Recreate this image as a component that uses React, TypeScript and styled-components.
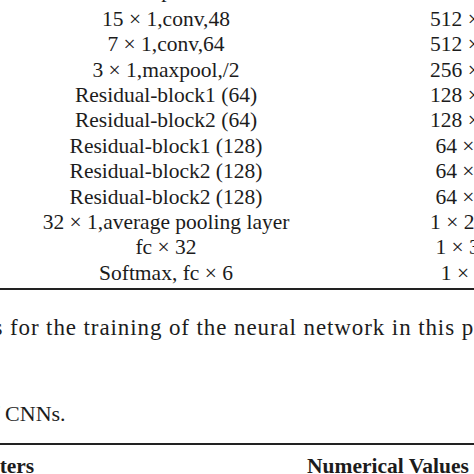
import React from "react";
import styled, { createGlobalStyle } from "styled-components";

const Global = createGlobalStyle`
  html, body {
    margin: 0;
    padding: 0;
    background: #ffffff;
    overflow: hidden;
  }
`;

const Page = styled.div`
  width: 474px;
  height: 474px;
  overflow: hidden;
  background: #ffffff;
`;

const Sheet = styled.div`
  margin-top: -22.5px;
  margin-left: -100px;
  width: 800px;
  font-family: "Liberation Serif", "Times New Roman", serif;
  color: #1c1c1c;
`;

const LayerTable = styled.div`
  display: grid;
  grid-template-columns: 300px 294px;
  padding-left: 116px;
  padding-bottom: 2px;
  border-bottom: 2px solid #222222;
`;

const Cell = styled.div<{ $lead?: boolean }>`
  height: 25.4px;
  line-height: 25.4px;
  padding-bottom: ${(p) => (p.$lead ? 4 : 0)}px;
  font-size: 21.5px;
  text-align: center;
  white-space: nowrap;
`;

const Line = styled.p<{ $top: number; $indent: number; $size: number; $spacing: number }>`
  margin: ${(p) => p.$top}px 0 0 ${(p) => p.$indent}px;
  font-size: ${(p) => p.$size}px;
  letter-spacing: ${(p) => p.$spacing}px;
  line-height: 26px;
  white-space: nowrap;
`;

const ParamTable = styled.div`
  margin-top: 16px;
  border-top: 2px solid #222222;
  padding-top: 8px;
  display: grid;
  grid-template-columns: 379px 300px;
  padding-left: 28px;
`;

const HeadCell = styled.div`
  font-size: 21.5px;
  line-height: 26px;
  font-weight: bold;
  white-space: nowrap;
`;

const layers: [string, string][] = [
  ["Input", "1024 × 1"],
  ["15 × 1,conv,48", "512 × 1"],
  ["7 × 1,conv,64", "512 × 1"],
  ["3 × 1,maxpool,/2", "256 × 1"],
  ["Residual-block1 (64)", "128 × 1"],
  ["Residual-block2 (64)", "128 × 1"],
  ["Residual-block1 (128)", "64 × 1"],
  ["Residual-block2 (128)", "64 × 1"],
  ["Residual-block2 (128)", "64 × 1"],
  ["32 × 1,average pooling layer", "1 × 256"],
  ["fc × 32", "1 × 32"],
  ["Softmax, fc × 6", "1 × 6"],
];

const App = () => {
  return (
    <Page>
      <Global />
      <Sheet>
        <LayerTable>
          {layers.map(([layer, size], i) => (
            <React.Fragment key={i}>
              <Cell $lead={i === 0}>{layer}</Cell>
              <Cell $lead={i === 0}>{size}</Cell>
            </React.Fragment>
          ))}
        </LayerTable>
        <Line $top={24.7} $indent={-6.6} $size={23} $spacing={0.9}>
          parameters for the training of the neural network in this paper.
        </Line>
        <Line $top={60} $indent={-98} $size={22} $spacing={0}>
          Table 2. Parameters of CNNs.
        </Line>
        <ParamTable>
          <HeadCell>Parameters</HeadCell>
          <HeadCell>Numerical Values</HeadCell>
        </ParamTable>
      </Sheet>
    </Page>
  );
};

export default App;
